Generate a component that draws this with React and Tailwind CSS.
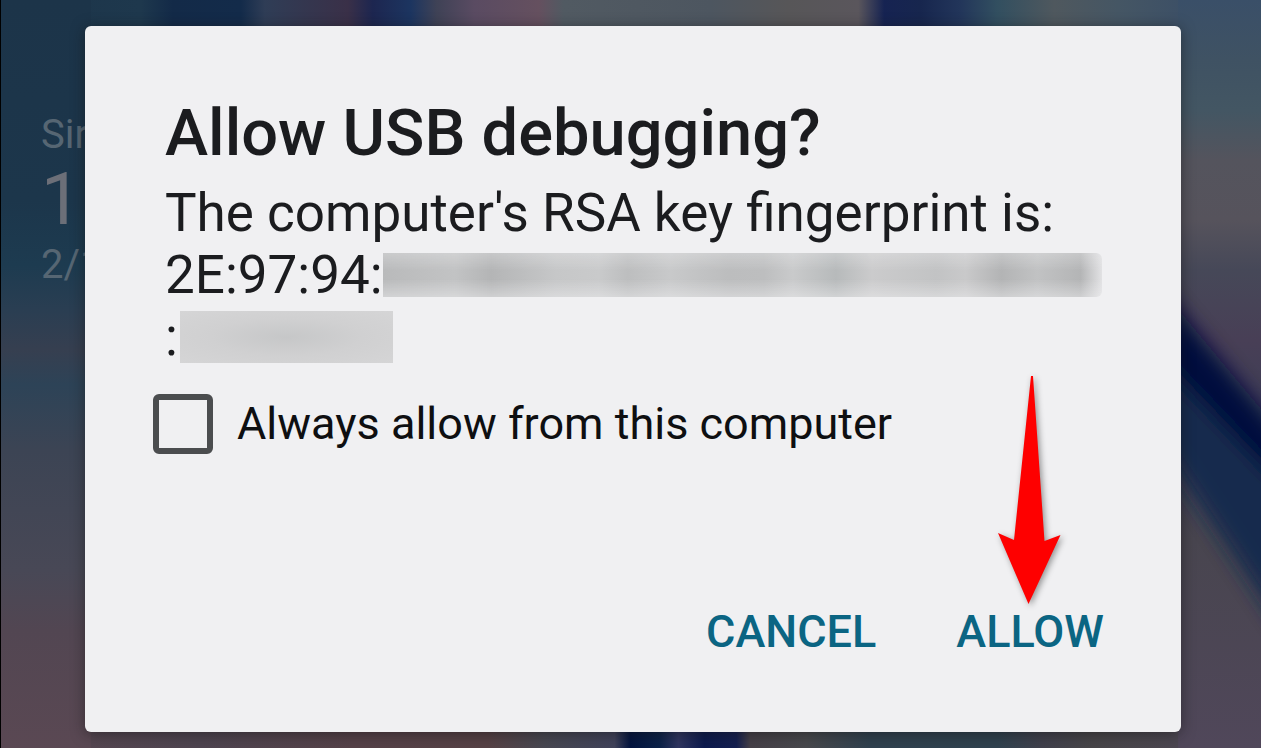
import { useId } from 'react';

const TOP_STOPS = [
  [0, '#1c3449'], [140, '#1e384d'], [172, '#132a48'], [240, '#132b4a'], [264, '#2f3d56'],
  [347, '#3a3048'], [372, '#1d2650'], [410, '#1c3560'], [436, '#3f4256'], [474, '#5a4b62'],
  [538, '#65505f'], [563, '#515a62'], [710, '#4d5660'], [787, '#575658'], [858, '#5a565c'],
  [884, '#162352'], [920, '#17264e'], [959, '#22355a'], [997, '#324f60'], [1054, '#4f585e'],
  [1118, '#455664'], [1181, '#3d5066'], [1261, '#384f6a'],
];

const BOTTOM_STOPS = [
  [0, '#594751'], [200, '#4e4450'], [353, '#554148'], [487, '#564145'], [544, '#474751'],
  [614, '#40425a'], [630, '#03143f'], [659, '#0b2148'], [678, '#2f3560'], [704, '#0c1a4e'],
  [736, '#141f50'], [750, '#454048'], [806, '#47484c'], [870, '#30414f'], [997, '#30424f'],
  [1042, '#40404c'], [1093, '#474548'], [1261, '#50475a'],
];

const LEFT_STOPS = [
  [0, '#1c3449'], [200, '#1c364b'], [265, '#1d3b50'], [310, '#2a3e52'], [350, '#363f50'],
  [385, '#2d4357'], [450, '#3c4454'], [570, '#484856'], [630, '#524652'], [748, '#5a4853'],
];

const RIGHT_STOPS = [
  [0, '#3a4f68'], [60, '#3f5263'], [110, '#435663'], [160, '#54545d'], [220, '#56535c'],
  [270, '#464858'], [340, '#483f56'], [420, '#3c3d56'], [540, '#48454f'], [748, '#50475a'],
];

function Stops({ items, size }) {
  return items.map(([at, color]) => <stop key={at} offset={at / size} stopColor={color} />);
}

function Wallpaper() {
  const id = useId();
  return (
    <svg
      className="absolute inset-0 h-full w-full"
      viewBox="0 0 1261 748"
      preserveAspectRatio="none"
      aria-hidden="true"
    >
      <defs>
        <linearGradient id={`${id}top`}><Stops items={TOP_STOPS} size={1261} /></linearGradient>
        <linearGradient id={`${id}bottom`}><Stops items={BOTTOM_STOPS} size={1261} /></linearGradient>
        <linearGradient id={`${id}left`} x2="0" y2="1"><Stops items={LEFT_STOPS} size={748} /></linearGradient>
        <linearGradient id={`${id}right`} x2="0" y2="1"><Stops items={RIGHT_STOPS} size={748} /></linearGradient>
        <filter id={`${id}soft`} x="-50%" y="-50%" width="200%" height="200%">
          <feGaussianBlur stdDeviation="10" />
        </filter>
      </defs>
      <rect width="1261" height="374" fill={`url(#${id}top)`} />
      <rect y="374" width="1261" height="374" fill={`url(#${id}bottom)`} />
      <rect width="90" height="748" fill={`url(#${id}left)`} />
      <rect x="1178" width="83" height="748" fill={`url(#${id}right)`} />
      <g filter={`url(#${id}soft)`}>
        <path d="M1150 290 L1290 450 V640 L1150 430 Z" fill="#12294e" />
        <path d="M1150 276 L1290 444 V496 L1150 350 Z" fill="#000f3c" />
      </g>
    </svg>
  );
}

function Arrow() {
  return (
    <svg
      className="pointer-events-none absolute bottom-full left-1/2 h-[228px] w-16 -translate-x-1/2 overflow-visible drop-shadow-[2px_2px_3px_rgba(0,0,0,0.4)]"
      viewBox="0 0 64 228"
      aria-hidden="true"
    >
      <path d="M33 0 H35 L46.5 165 L62.5 159 L30.5 228 L0 157 L16 164 Z" fill="#fe0000" />
    </svg>
  );
}

export default function App() {
  return (
    <main className="relative flex min-h-screen border-l border-black bg-[#1c3449] font-['Roboto',sans-serif]">
      <Wallpaper />

      {/* Lock screen clock, mostly hidden by the dialog */}
      <div className="relative w-21 shrink-0 overflow-hidden whitespace-nowrap pt-[111px] pl-10 text-[40px] leading-12 text-[#566673]">
        <div>Sir</div>
        <div className="text-[72px] leading-[82px] text-[#6c6f78]">1</div>
        <div>2/1</div>
      </div>

      <section
        role="dialog"
        aria-labelledby="usb-title"
        className="relative mt-[26px] mr-20 mb-4 flex flex-1 flex-col rounded-md bg-[#f0f0f2] pt-[67px] pr-[77px] pb-18 pl-17 shadow-[0_2px_14px_rgba(20,20,20,0.5)]"
      >
        <div className="pl-3 text-[#1b1c1f]">
          <h1 id="usb-title" className="text-[65px] leading-20 font-medium">Allow USB debugging?</h1>
          <div className="mt-[9px] text-[53px] leading-[62px]">
            <p>The computer&apos;s RSA key fingerprint is:</p>
            <div className="flex items-center">
              <span>2E:97:94:</span>
              <span className="mr-0.5 h-11 flex-1 rounded-r-md bg-[linear-gradient(180deg,rgba(240,240,242,0.3),transparent_40%,transparent_60%,rgba(240,240,242,0.45)),linear-gradient(90deg,#b9babb_0%,#c2c3c4_10%,#b4b5b6_15%,#c6c7c8_24%,#c9cacb_30%,#bdbebf_34%,#c8c9ca_40%,#bcbdbe_48%,#bdbebf_53%,#c9cacb_57%,#b7babb_63%,#cbcbcc_68%,#c2c3c4_77%,#c9c9ca_81%,#b3b4b5_86%,#c1c2c3_91%,#b4b5b6_97%,#e2e2e4_100%)]" />
            </div>
            <div className="flex items-center gap-0.5">
              <span>:</span>
              <span className="h-13 w-[213px] bg-[radial-gradient(ellipse_at_50%_50%,#c6c7c8,#d0d0d1_50%,#d5d5d6)]" />
            </div>
          </div>
        </div>

        <label className="mt-[26px] flex items-center gap-6 text-[45px] leading-[60px] text-[#0e0f11]">
          <input
            type="checkbox"
            className="size-15 shrink-0 appearance-none rounded-md border-6 border-[#4b4d4f] checked:bg-[#4b4d4f]"
          />
          Always allow from this computer
        </label>

        <div className="mt-auto flex justify-end gap-20 text-[45px] leading-14 font-medium text-[#0b6583]">
          <button type="button">CANCEL</button>
          <div className="relative">
            <button type="button">ALLOW</button>
            <Arrow />
          </div>
        </div>
      </section>
    </main>
  );
}
